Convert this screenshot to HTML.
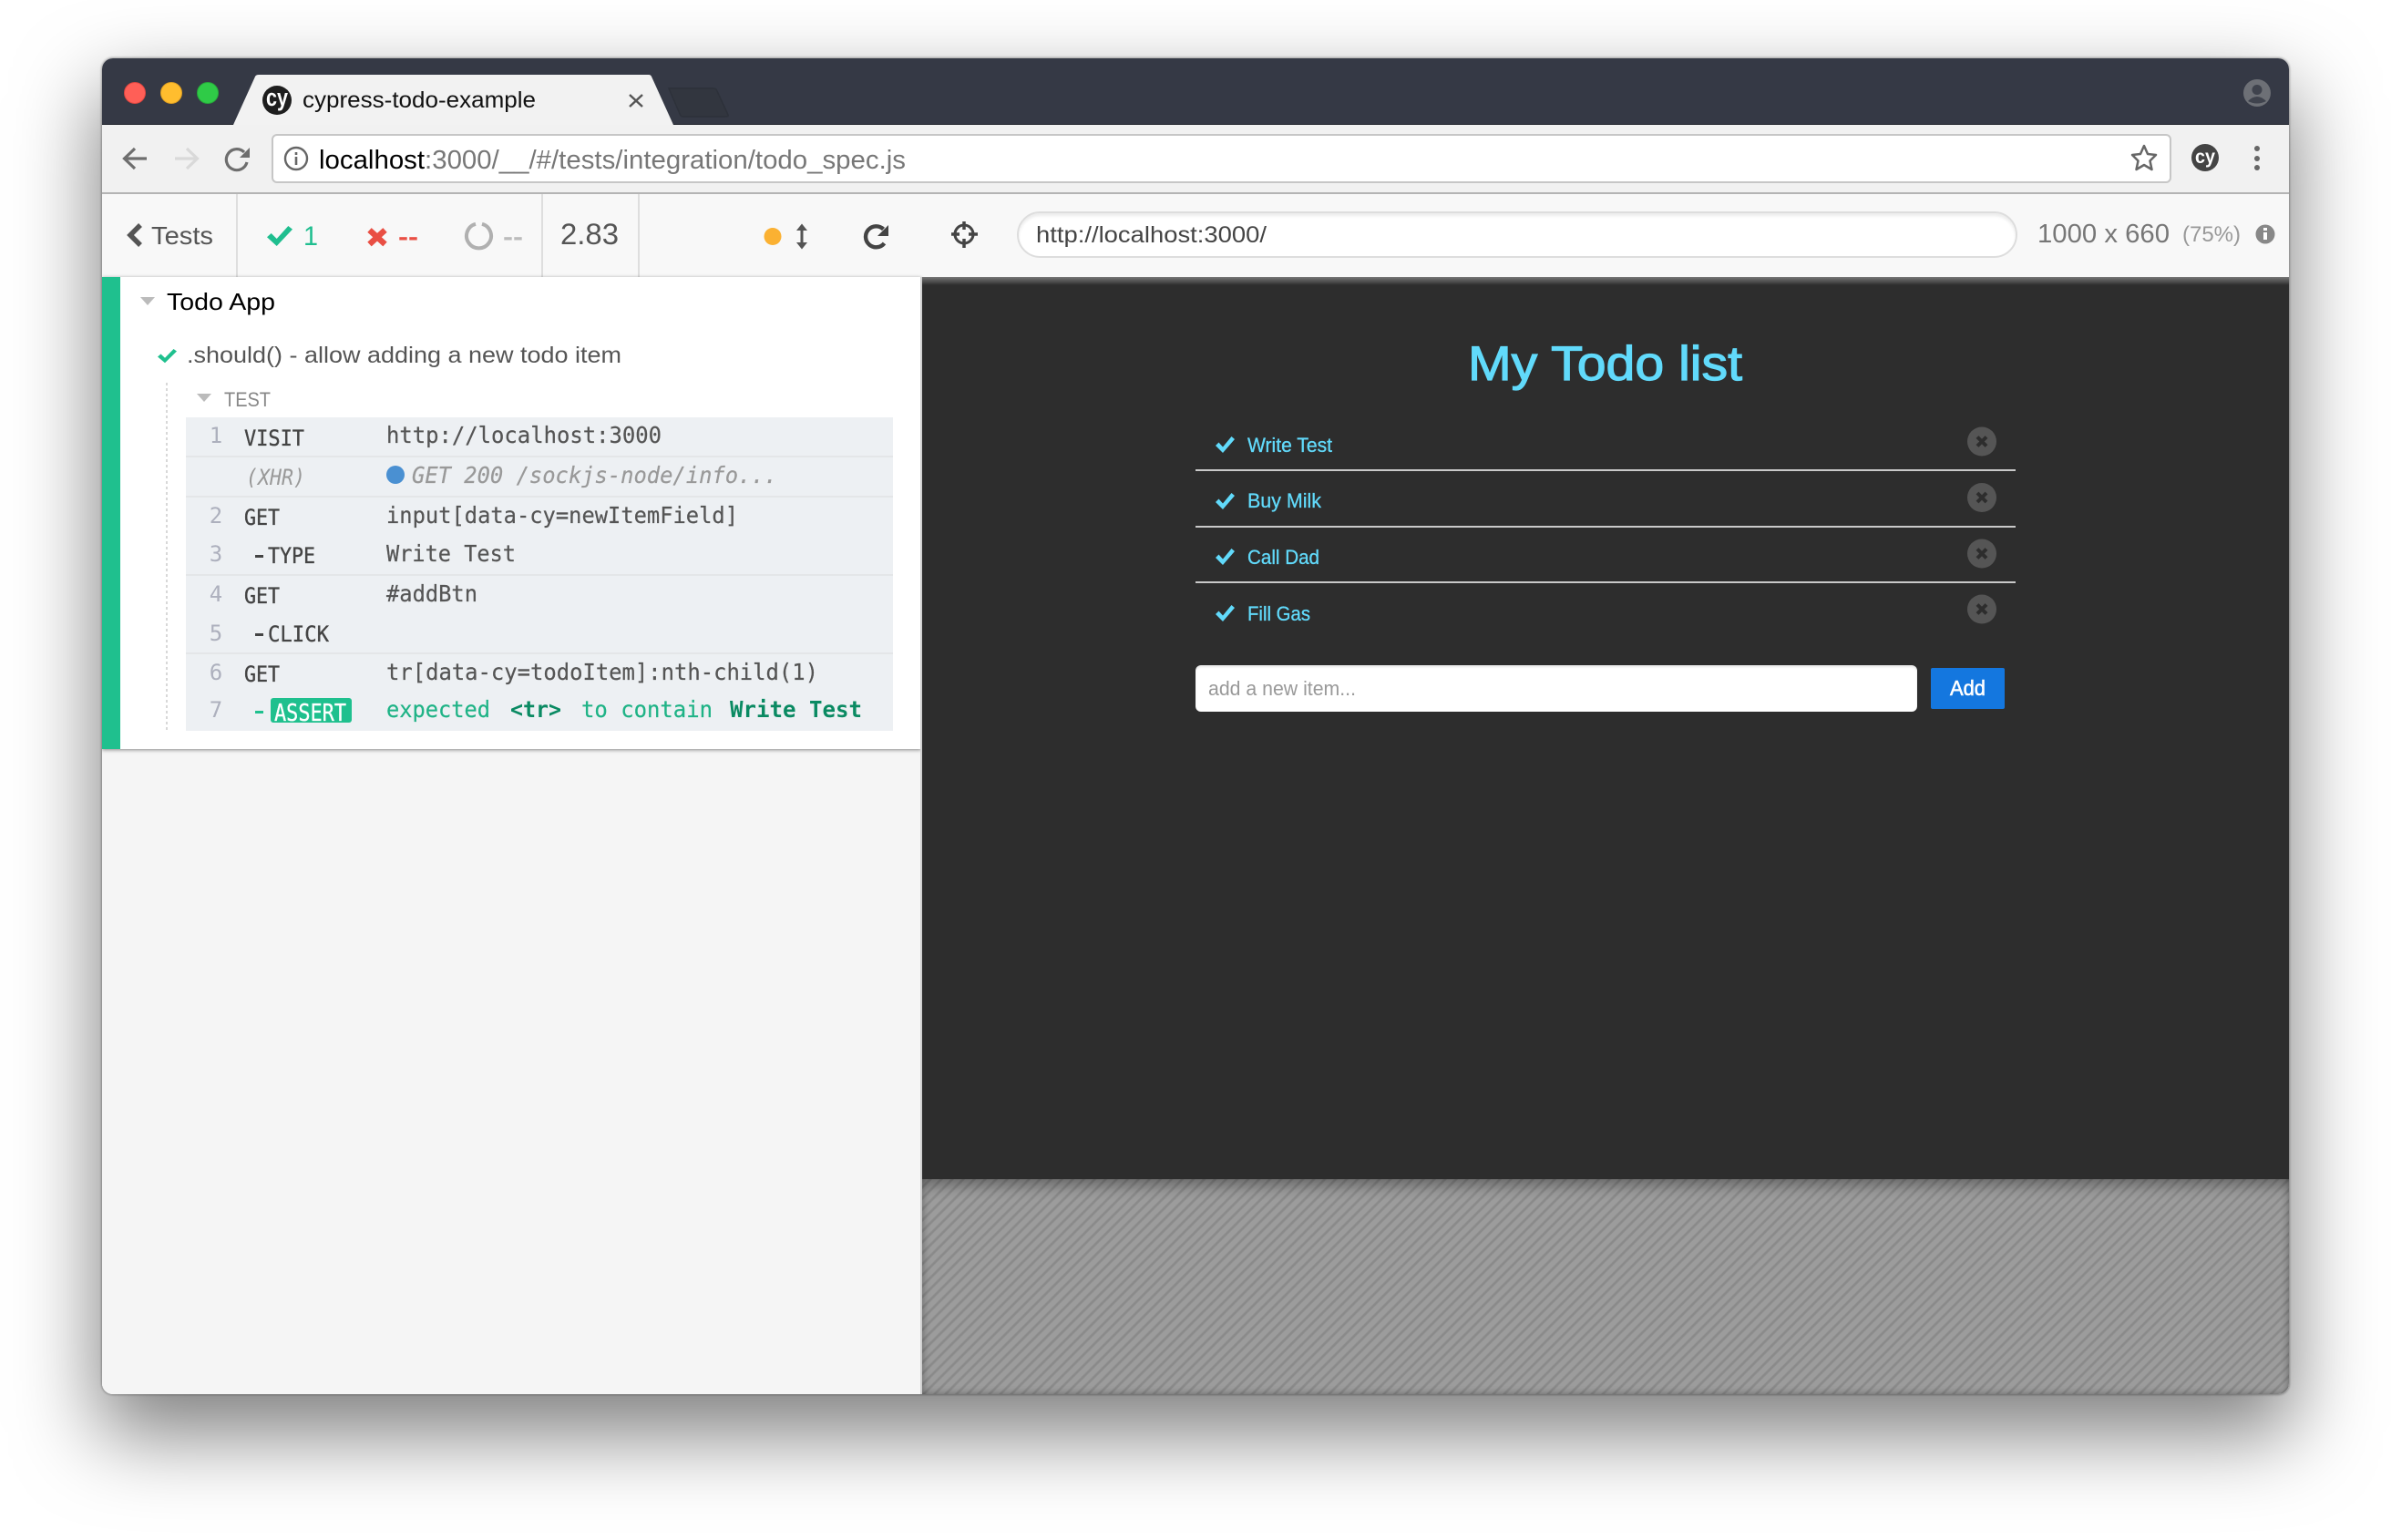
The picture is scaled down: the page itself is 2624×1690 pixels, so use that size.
<!DOCTYPE html>
<html lang="en"><head><meta charset="utf-8"><title>cypress-todo-example</title>
<style>
html,body{margin:0;padding:0;background:#fff;width:2624px;height:1690px;overflow:hidden}
.abs{position:absolute}
#shadow{left:112px;top:64px;width:2400px;height:1466px;border-radius:12px;box-shadow:0 40px 90px 4px rgba(0,0,0,.5),0 0 2px 1px rgba(0,0,0,.3)}
#win{left:112px;top:64px;width:2400px;height:1466px;border-radius:12px;overflow:hidden;background:#f5f5f5}
#tabs{left:0;top:0;width:2400px;height:73px;background:#353945;box-shadow:inset 0 -1px 0 #22252d}
#addr{left:0;top:73px;width:2400px;height:76px;background:#f1f1f1;box-sizing:border-box;border-bottom:2px solid #b4b4b4}
#urlbar{left:186px;top:83px;width:2085px;height:54px;box-sizing:border-box;background:#fff;border:2px solid #c6c6c6;border-radius:6px}
#tool{left:0;top:149px;width:2400px;height:91px;background:#f8f8f8}
.div{top:149px;width:2px;height:91px;background:#dedede}
#reporter{left:0;top:240px;width:900px;height:1226px;background:#f5f5f5}
#spec{left:0;top:0;width:899px;height:518px;background:#fff;box-shadow:0 1px 4px rgba(0,0,0,.45)}
#bar{left:0;top:0;width:20px;height:518px;background:#1fc08e}
#vline{left:898px;top:240px;width:2px;height:1226px;background:#d0d0d0}
#dark{left:900px;top:240px;width:1500px;height:990px;background:#2d2d2d;background-image:linear-gradient(#777,#2d2d2d 9px)}
#stripe{left:900px;top:1230px;width:1500px;height:236px;background:repeating-linear-gradient(135deg,#9c9c9c 0,#9c9c9c 4.5px,#8a8a8a 5.8px,#8a8a8a 7.2px,#9c9c9c 8.5px);box-shadow:inset 0 16px 14px -8px rgba(0,0,0,.3),inset 7px 0 8px -5px rgba(0,0,0,.2),inset -7px 0 8px -5px rgba(0,0,0,.2),inset 0 -7px 8px -5px rgba(0,0,0,.2)}
#rurl{left:1004px;top:168px;width:1098px;height:51px;box-sizing:border-box;background:#fff;border:2px solid #ddd;border-radius:26px;box-shadow:inset 0 3px 3px rgba(0,0,0,.08)}
#cmds{left:92px;top:154px;width:776px;height:344px;background:#edf0f3}
.sep{left:0;width:776px;height:2px;background:#e4e6e8}
#inp{left:1200px;top:666px;width:792px;height:51px;box-sizing:border-box;background:#fff;border-radius:6px;box-shadow:inset 0 2px 2px rgba(0,0,0,.1)}
#btn{left:2007px;top:669px;width:81px;height:45px;background:#1477df;border-radius:2px}
.ln{left:1200px;width:900px;height:2px;background:#c9c9c9}
svg{position:absolute;left:0;top:0}
text{font-family:"Liberation Sans",sans-serif}
.m text,text.m{font-family:"DejaVu Sans Mono","Liberation Mono",monospace}
</style></head><body>
<div class="abs" id="shadow"></div>
<div class="abs" id="win">
  <div class="abs" id="tabs"></div>
  <div class="abs" id="addr"></div>
  <div class="abs" id="urlbar"></div>
  <div class="abs" id="tool"></div>
  <div class="abs div" style="left:147px"></div>
  <div class="abs div" style="left:482px"></div>
  <div class="abs div" style="left:588px"></div>
  <div class="abs" id="rurl"></div>
  <div class="abs" id="reporter">
    <div class="abs" id="spec">
      <div class="abs" id="cmds" style="left:92px;top:154px">
        <div class="abs sep" style="top:42px"></div>
        <div class="abs sep" style="top:86px"></div>
        <div class="abs sep" style="top:172px"></div>
        <div class="abs sep" style="top:258px"></div>
      </div>
    </div>
    <div class="abs" id="bar"></div>
  </div>
  <div class="abs" id="vline"></div>
  <div class="abs" id="dark"></div>
  <div class="abs" id="stripe"></div>
  <div class="abs ln" style="top:451px"></div>
  <div class="abs ln" style="top:513px"></div>
  <div class="abs ln" style="top:574px"></div>
  <div class="abs" id="inp"></div>
  <div class="abs" id="btn"></div>
</div>
<svg width="2624" height="1690" viewBox="0 0 2624 1690" xmlns="http://www.w3.org/2000/svg">
  <!-- traffic lights -->
  <circle cx="148" cy="102" r="11.5" fill="#ff5f57" stroke="#e14640" stroke-width="1"/>
  <circle cx="188" cy="102" r="11.5" fill="#ffbd2e" stroke="#dfa023" stroke-width="1"/>
  <circle cx="228" cy="102" r="11.5" fill="#2fcb47" stroke="#27a93a" stroke-width="1"/>
  <!-- tab -->
  <path d="M256 137 L280 84 Q281 82 284 82 L712 82 Q714 82 715 84 L739 137 Z" fill="#f2f2f2"/>
  <circle cx="304" cy="110" r="16" fill="#1e1e1e"/>
  <text x="292" y="116" font-size="27" font-weight="bold" fill="#fff" textLength="24" lengthAdjust="spacingAndGlyphs">cy</text>
  <text x="332" y="118" font-size="25" fill="#111" textLength="256" lengthAdjust="spacingAndGlyphs">cypress-todo-example</text>
  <path d="M691 104 L705 117 M705 104 L691 117" stroke="#555" stroke-width="2.4" fill="none"/>
  <path d="M734 97 L783 97 Q786 97 787 100 L799 126 Q800 128 796 128 L750 128 Q747 128 746 125 Z" fill="#32363f" stroke="#2d313a" stroke-width="1.5"/>
  <!-- profile -->
  <circle cx="2477" cy="102" r="15" fill="#6d7076"/>
  <circle cx="2477" cy="98.500" r="5.500" fill="#3f434d"/>
  <path d="M2467 111 Q2477 101 2487 111 Q2477 116 2467 111 Z" fill="#3f434d"/>
  <!-- nav -->
  <path d="M161 174 H138 M148 163 L136.500 174 L148 185" stroke="#6e6e6e" stroke-width="3.200" fill="none"/>
  <path d="M192 174 H215 M205 163 L216.500 174 L205 185" stroke="#d9d9d9" stroke-width="3.200" fill="none"/>
  <path d="M268 167 A11.500 11.500 0 1 0 271 178" stroke="#6e6e6e" stroke-width="3.200" fill="none"/>
  <path d="M274 162 V173 H263 Z" fill="#6e6e6e"/>
  <!-- url -->
  <circle cx="325" cy="174" r="12" fill="none" stroke="#666" stroke-width="2.400"/>
  <rect x="323.700" y="172" width="2.600" height="9" fill="#666"/><rect x="323.700" y="167" width="2.600" height="3" fill="#666"/>
  <text x="350" y="185" font-size="29" textLength="644" lengthAdjust="spacingAndGlyphs" fill="#777"><tspan fill="#000">localhost</tspan>:3000/__/#/tests/integration/todo_spec.js</text>
  <path d="M2353 160 L2357 169 L2366 170 L2359.500 176.500 L2361.500 186 L2353 181 L2344.500 186 L2346.500 176.500 L2340 170 L2349 169 Z" fill="none" stroke="#666" stroke-width="2.500" stroke-linejoin="round"/>
  <circle cx="2420" cy="173" r="15" fill="#444"/>
  <text x="2409" y="179" font-size="21" font-weight="bold" fill="#fff" textLength="22" lengthAdjust="spacingAndGlyphs">cy</text>
  <circle cx="2477" cy="163" r="3" fill="#666"/><circle cx="2477" cy="174" r="3" fill="#666"/><circle cx="2477" cy="184" r="3" fill="#666"/>
  <!-- toolbar -->
  <path d="M154 247 L143 258 L154 269" stroke="#555" stroke-width="5.500" fill="none"/>
  <text x="166" y="268" font-size="28" fill="#555" textLength="68" lengthAdjust="spacingAndGlyphs">Tests</text>
  <path d="M0 10 L3.500 6.500 L8 11.500 L17.500 0 L21 3 L8 18 Z" transform="translate(293 248) scale(1.333 1.222)" fill="#1fbe8f"/>
  <text x="333" y="269" font-size="30" fill="#1fbe8f" textLength="16" lengthAdjust="spacingAndGlyphs">1</text>
  <path d="M405.500 252.500 L422.500 268 M422.500 252.500 L405.500 268" stroke="#e94f44" stroke-width="6.500" fill="none"/>
  <text x="437" y="269" font-size="28" font-weight="bold" fill="#e94f44" textLength="22" lengthAdjust="spacingAndGlyphs">--</text>
  <path d="M522 245.800 A13.500 13.500 0 1 0 529 245.800" stroke="#b0b0b0" stroke-width="4" fill="none"/>
  <text x="552" y="269" font-size="28" font-weight="bold" fill="#bbb" textLength="22" lengthAdjust="spacingAndGlyphs">--</text>
  <text x="615" y="268" font-size="32" fill="#555" textLength="64" lengthAdjust="spacingAndGlyphs">2.83</text>
  <circle cx="848" cy="259.500" r="9.500" fill="#fbb132"/>
  <path d="M879 252 H881 V267 H879 Z" fill="#555" stroke="#555" stroke-width="1"/>
  <path d="M874 253 L880 245.500 L886 253 Z M874 266 L880 273.500 L886 266 Z" fill="#555"/>
  <path d="M969.500 251.500 A11.500 11.500 0 1 0 970.500 267" stroke="#444" stroke-width="4.400" fill="none"/>
  <path d="M975 247 V259 H963 Z" fill="#444"/>
  <!-- crosshair -->
  <circle cx="1058" cy="257" r="10" fill="none" stroke="#444" stroke-width="3"/>
  <path d="M1058 243 V252 M1058 262 V272 M1044 257 H1053 M1063 257 H1073" stroke="#444" stroke-width="3.500" fill="none"/>
  <text x="1137" y="266" font-size="25" fill="#444" textLength="253" lengthAdjust="spacingAndGlyphs">http://localhost:3000/</text>
  <text x="2236" y="266" font-size="29" fill="#777" textLength="145" lengthAdjust="spacingAndGlyphs">1000 x 660</text>
  <text x="2395" y="265" font-size="24" fill="#999" textLength="64" lengthAdjust="spacingAndGlyphs">(75%)</text>
  <circle cx="2486" cy="257" r="10.500" fill="#888"/>
  <rect x="2484" y="255" width="4" height="8" fill="#fff"/><rect x="2484" y="250" width="4" height="3" fill="#fff"/>
  <!-- reporter -->
  <path d="M154 326 H170 L162 335 Z" fill="#bbb"/>
  <text x="183" y="340" font-size="26" fill="#000" textLength="119" lengthAdjust="spacingAndGlyphs">Todo App</text>
  <path d="M0 10 L3.500 6.500 L8 11.500 L17.500 0 L21 3 L8 18 Z" transform="translate(173 383) scale(1 .85)" fill="#1fc08e"/>
  <text x="205" y="398" font-size="25" fill="#555" textLength="477" lengthAdjust="spacingAndGlyphs">.should() - allow adding a new todo item</text>
  <path d="M183 420 V802" stroke="#ccc" stroke-width="1.500" stroke-dasharray="3 3"/>
  <path d="M216 432 H232 L224 441 Z" fill="#bbb"/>
  <text x="246" y="446" font-size="22" fill="#888" textLength="51" lengthAdjust="spacingAndGlyphs">TEST</text>
  <g class="m" font-size="25">
    <g fill="#adb0bd" text-anchor="middle" font-size="24">
      <text x="237" y="486">1</text><text x="237" y="574">2</text><text x="237" y="616">3</text><text x="237" y="660">4</text><text x="237" y="703">5</text><text x="237" y="746">6</text><text x="237" y="787">7</text>
    </g>
    <g fill="#444" stroke="#444" stroke-width=".35" font-size="24">
      <text x="268" y="489" textLength="66" lengthAdjust="spacingAndGlyphs">VISIT</text>
      <text x="268" y="576" textLength="39" lengthAdjust="spacingAndGlyphs">GET</text>
      <text x="294" y="618" textLength="52" lengthAdjust="spacingAndGlyphs">TYPE</text>
      <text x="268" y="662" textLength="39" lengthAdjust="spacingAndGlyphs">GET</text>
      <text x="294" y="704" textLength="67" lengthAdjust="spacingAndGlyphs">CLICK</text>
      <text x="268" y="748" textLength="39" lengthAdjust="spacingAndGlyphs">GET</text>
    </g>
    <rect x="280" y="609" width="9" height="3" fill="#444"/>
    <rect x="280" y="695" width="9" height="3" fill="#444"/>
    <rect x="280" y="780" width="9" height="3" fill="#1fc08e"/>
    <text x="270" y="532" font-size="24" font-style="italic" fill="#999" textLength="65" lengthAdjust="spacingAndGlyphs">(XHR)</text>
    <rect x="297" y="766" width="89" height="27" rx="3" fill="#1fc08e"/>
    <text x="301" y="791" font-size="26" fill="#fff" stroke="#fff" stroke-width=".3" textLength="79" lengthAdjust="spacingAndGlyphs">ASSERT</text>
    <g fill="#555" stroke="#555" stroke-width=".2">
      <text x="424" y="486" textLength="302" lengthAdjust="spacingAndGlyphs">http://localhost:3000</text>
      <text x="424" y="574" textLength="386" lengthAdjust="spacingAndGlyphs">input[data-cy=newItemField]</text>
      <text x="424" y="616" textLength="142" lengthAdjust="spacingAndGlyphs">Write Test</text>
      <text x="424" y="660" textLength="100" lengthAdjust="spacingAndGlyphs">#addBtn</text>
      <text x="424" y="746" textLength="474" lengthAdjust="spacingAndGlyphs">tr[data-cy=todoItem]:nth-child(1)</text>
    </g>
    <circle cx="434" cy="521" r="10" fill="#4a90d2"/>
    <text x="452" y="530" font-style="italic" fill="#999" stroke="#999" stroke-width=".2" textLength="401" lengthAdjust="spacingAndGlyphs">GET 200 /sockjs-node/info...</text>
    <text x="424" y="787" fill="#1fb386" stroke="#1fb386" stroke-width=".2" textLength="114" lengthAdjust="spacingAndGlyphs">expected</text>
    <text x="560" y="787" fill="#0a8a62" font-weight="bold" textLength="56" lengthAdjust="spacingAndGlyphs">&lt;tr&gt;</text>
    <text x="638" y="787" fill="#1fb386" stroke="#1fb386" stroke-width=".2" textLength="144" lengthAdjust="spacingAndGlyphs">to contain</text>
    <text x="801" y="787" fill="#0a8a62" font-weight="bold" textLength="145" lengthAdjust="spacingAndGlyphs">Write Test</text>
  </g>
  <!-- app -->
  <text x="1611" y="417" font-size="53" fill="#61dafb" stroke="#61dafb" stroke-width="1.200" textLength="301" lengthAdjust="spacingAndGlyphs">My Todo list</text>
  <g fill="#61dafb">
    <path d="M0 10 L3.500 6.500 L8 11.500 L17.500 0 L21 3 L8 18 Z" transform="translate(1334 479)"/>
    <path d="M0 10 L3.500 6.500 L8 11.500 L17.500 0 L21 3 L8 18 Z" transform="translate(1334 541)"/>
    <path d="M0 10 L3.500 6.500 L8 11.500 L17.500 0 L21 3 L8 18 Z" transform="translate(1334 602)"/>
    <path d="M0 10 L3.500 6.500 L8 11.500 L17.500 0 L21 3 L8 18 Z" transform="translate(1334 664)"/>
  </g>
  <g fill="#61dafb" stroke="#61dafb" stroke-width=".3" font-size="22">
    <text x="1369" y="496" textLength="93" lengthAdjust="spacingAndGlyphs">Write Test</text>
    <text x="1369" y="557" textLength="81" lengthAdjust="spacingAndGlyphs">Buy Milk</text>
    <text x="1369" y="619" textLength="79" lengthAdjust="spacingAndGlyphs">Call Dad</text>
    <text x="1369" y="681" textLength="69" lengthAdjust="spacingAndGlyphs">Fill Gas</text>
  </g>
  <g fill="#555"><circle cx="2175" cy="484.500" r="16"/><circle cx="2175" cy="546" r="16"/><circle cx="2175" cy="607.500" r="16"/><circle cx="2175" cy="668.500" r="16"/></g>
  <g stroke="#2d2d2d" stroke-width="4" fill="none">
    <path d="M2170 479.500 L2180 489.500 M2180 479.500 L2170 489.500"/>
    <path d="M2170 541 L2180 551 M2180 541 L2170 551"/>
    <path d="M2170 602.500 L2180 612.500 M2180 602.500 L2170 612.500"/>
    <path d="M2170 663.500 L2180 673.500 M2180 663.500 L2170 673.500"/>
  </g>
  <text x="1326" y="763" font-size="22" fill="#999" textLength="162" lengthAdjust="spacingAndGlyphs">add a new item...</text>
  <text x="2140" y="763" font-size="23" fill="#fff" stroke="#fff" stroke-width=".6" textLength="39" lengthAdjust="spacingAndGlyphs">Add</text>
</svg>
</body></html>
